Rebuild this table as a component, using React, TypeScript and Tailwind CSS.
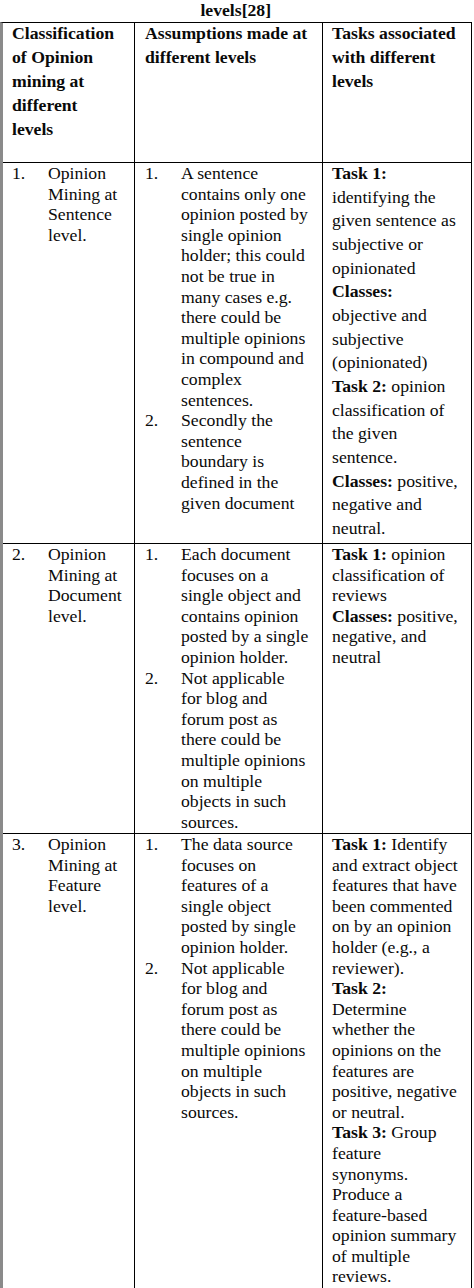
import type { ReactNode } from "react";

type Line = ReactNode;

const B = ({ children }: { children: ReactNode }) => <span className="font-bold">{children}</span>;

const Lines = ({ lines, leading = "leading-[20.6px]" }: { lines: Line[]; leading?: string }) => (
  <div className={leading}>
    {lines.map((l, i) => (
      <div key={i} className="whitespace-nowrap">
        {l}
      </div>
    ))}
  </div>
);

const Item = ({ n, lines }: { n: string; lines: Line[] }) => (
  <div className="flex">
    <div className="w-[36px] shrink-0 leading-[20.6px]">{n}</div>
    <Lines lines={lines} />
  </div>
);

const rows: { level: [string, Line[]]; assumptions: [string, Line[]][]; tasks: Line[]; taskLeading?: string; h: string }[] = [
  {
    level: ["1.", ["Opinion", "Mining at", "Sentence", "level."]],
    assumptions: [
      [
        "1.",
        [
          "A sentence",
          "contains only one",
          "opinion posted by",
          "single opinion",
          "holder; this could",
          "not be true in",
          "many cases e.g.",
          "there could be",
          "multiple opinions",
          "in compound and",
          "complex",
          "sentences.",
        ],
      ],
      ["2.", ["Secondly the", "sentence", "boundary is", "defined in the", "given document"]],
    ],
    tasks: [
      <B>Task 1:</B>,
      "identifying the",
      "given sentence as",
      "subjective or",
      "opinionated",
      <B>Classes:</B>,
      "objective and",
      "subjective",
      "(opinionated)",
      <>
        <B>Task 2:</B> opinion
      </>,
      "classification of",
      "the given",
      "sentence.",
      <>
        <B>Classes:</B> positive,
      </>,
      "negative and",
      "neutral.",
    ],
    taskLeading: "leading-[23.65px] -mt-[1px]",
    h: "min-h-[381px]",
  },
  {
    level: ["2.", ["Opinion", "Mining at", "Document", "level."]],
    assumptions: [
      ["1.", ["Each document", "focuses on a", "single object and", "contains opinion", "posted by a single", "opinion holder."]],
      [
        "2.",
        ["Not applicable", "for blog and", "forum post as", "there could be", "multiple opinions", "on multiple", "objects in such", "sources."],
      ],
    ],
    tasks: [
      <>
        <B>Task 1:</B> opinion
      </>,
      "classification of",
      "reviews",
      <>
        <B>Classes:</B> positive,
      </>,
      "negative, and",
      "neutral",
    ],
    h: "min-h-[290px]",
  },
  {
    level: ["3.", ["Opinion", "Mining at", "Feature", "level."]],
    assumptions: [
      ["1.", ["The data source", "focuses on", "features of a", "single object", "posted by single", "opinion holder."]],
      [
        "2.",
        ["Not applicable", "for blog and", "forum post as", "there could be", "multiple opinions", "on multiple", "objects in such", "sources."],
      ],
    ],
    tasks: [
      <>
        <B>Task 1:</B> Identify
      </>,
      "and extract object",
      "features that have",
      "been commented",
      "on by an opinion",
      "holder (e.g., a",
      "reviewer).",
      <B>Task 2:</B>,
      "Determine",
      "whether the",
      "opinions on the",
      "features are",
      "positive, negative",
      "or neutral.",
      <>
        <B>Task 3:</B> Group
      </>,
      "feature",
      "synonyms.",
      "Produce a",
      "feature-based",
      "opinion summary",
      "of multiple",
      "reviews.",
    ],
    h: "min-h-[460px]",
  },
];

export default function App() {
  return (
    <div className="w-[474px] h-[1288px] overflow-hidden bg-white text-[#0a0a0a] font-['Liberation_Serif','Times_New_Roman',serif] text-[17.7px]">
      <div className="h-[22px] leading-[20px] text-center font-bold w-[471.5px]">levels[28]</div>
      <div className="w-[471.5px] border-t-[1.5px] border-t-black border-r-[1.5px] border-r-black border-l-[3px] border-l-[#8a8a8a]">
        <div className="grid grid-cols-[131.5px_188px_1fr] h-[140px] border-b-[1.5px] border-black font-bold">
          <div className="border-r-[1.5px] border-black pl-[9px]">
            <div className="-mt-[2px]">
              <Lines leading="leading-[24px]" lines={["Classification", "of Opinion", "mining at", "different", "levels"]} />
            </div>
          </div>
          <div className="border-r-[1.5px] border-black pl-[10.5px]">
            <div className="-mt-[2px]">
              <Lines leading="leading-[24px]" lines={["Assumptions made at", "different levels"]} />
            </div>
          </div>
          <div className="pl-[9.5px]">
            <div className="-mt-[2px]">
              <Lines leading="leading-[24px]" lines={["Tasks associated", "with different", "levels"]} />
            </div>
          </div>
        </div>
        {rows.map((r, i) => (
          <div key={i} className={`grid grid-cols-[131.5px_188px_1fr] border-b-[1.5px] border-black ${r.h}`}>
            <div className="border-r-[1.5px] border-black pl-[9px]">
              <Item n={r.level[0]} lines={r.level[1]} />
            </div>
            <div className="border-r-[1.5px] border-black pl-[10.5px]">
              {r.assumptions.map(([n, lines], j) => (
                <Item key={j} n={n} lines={lines} />
              ))}
            </div>
            <div className="pl-[9.5px]">
              <Lines lines={r.tasks} leading={r.taskLeading ?? "leading-[20.6px]"} />
            </div>
          </div>
        ))}
      </div>
    </div>
  );
}
